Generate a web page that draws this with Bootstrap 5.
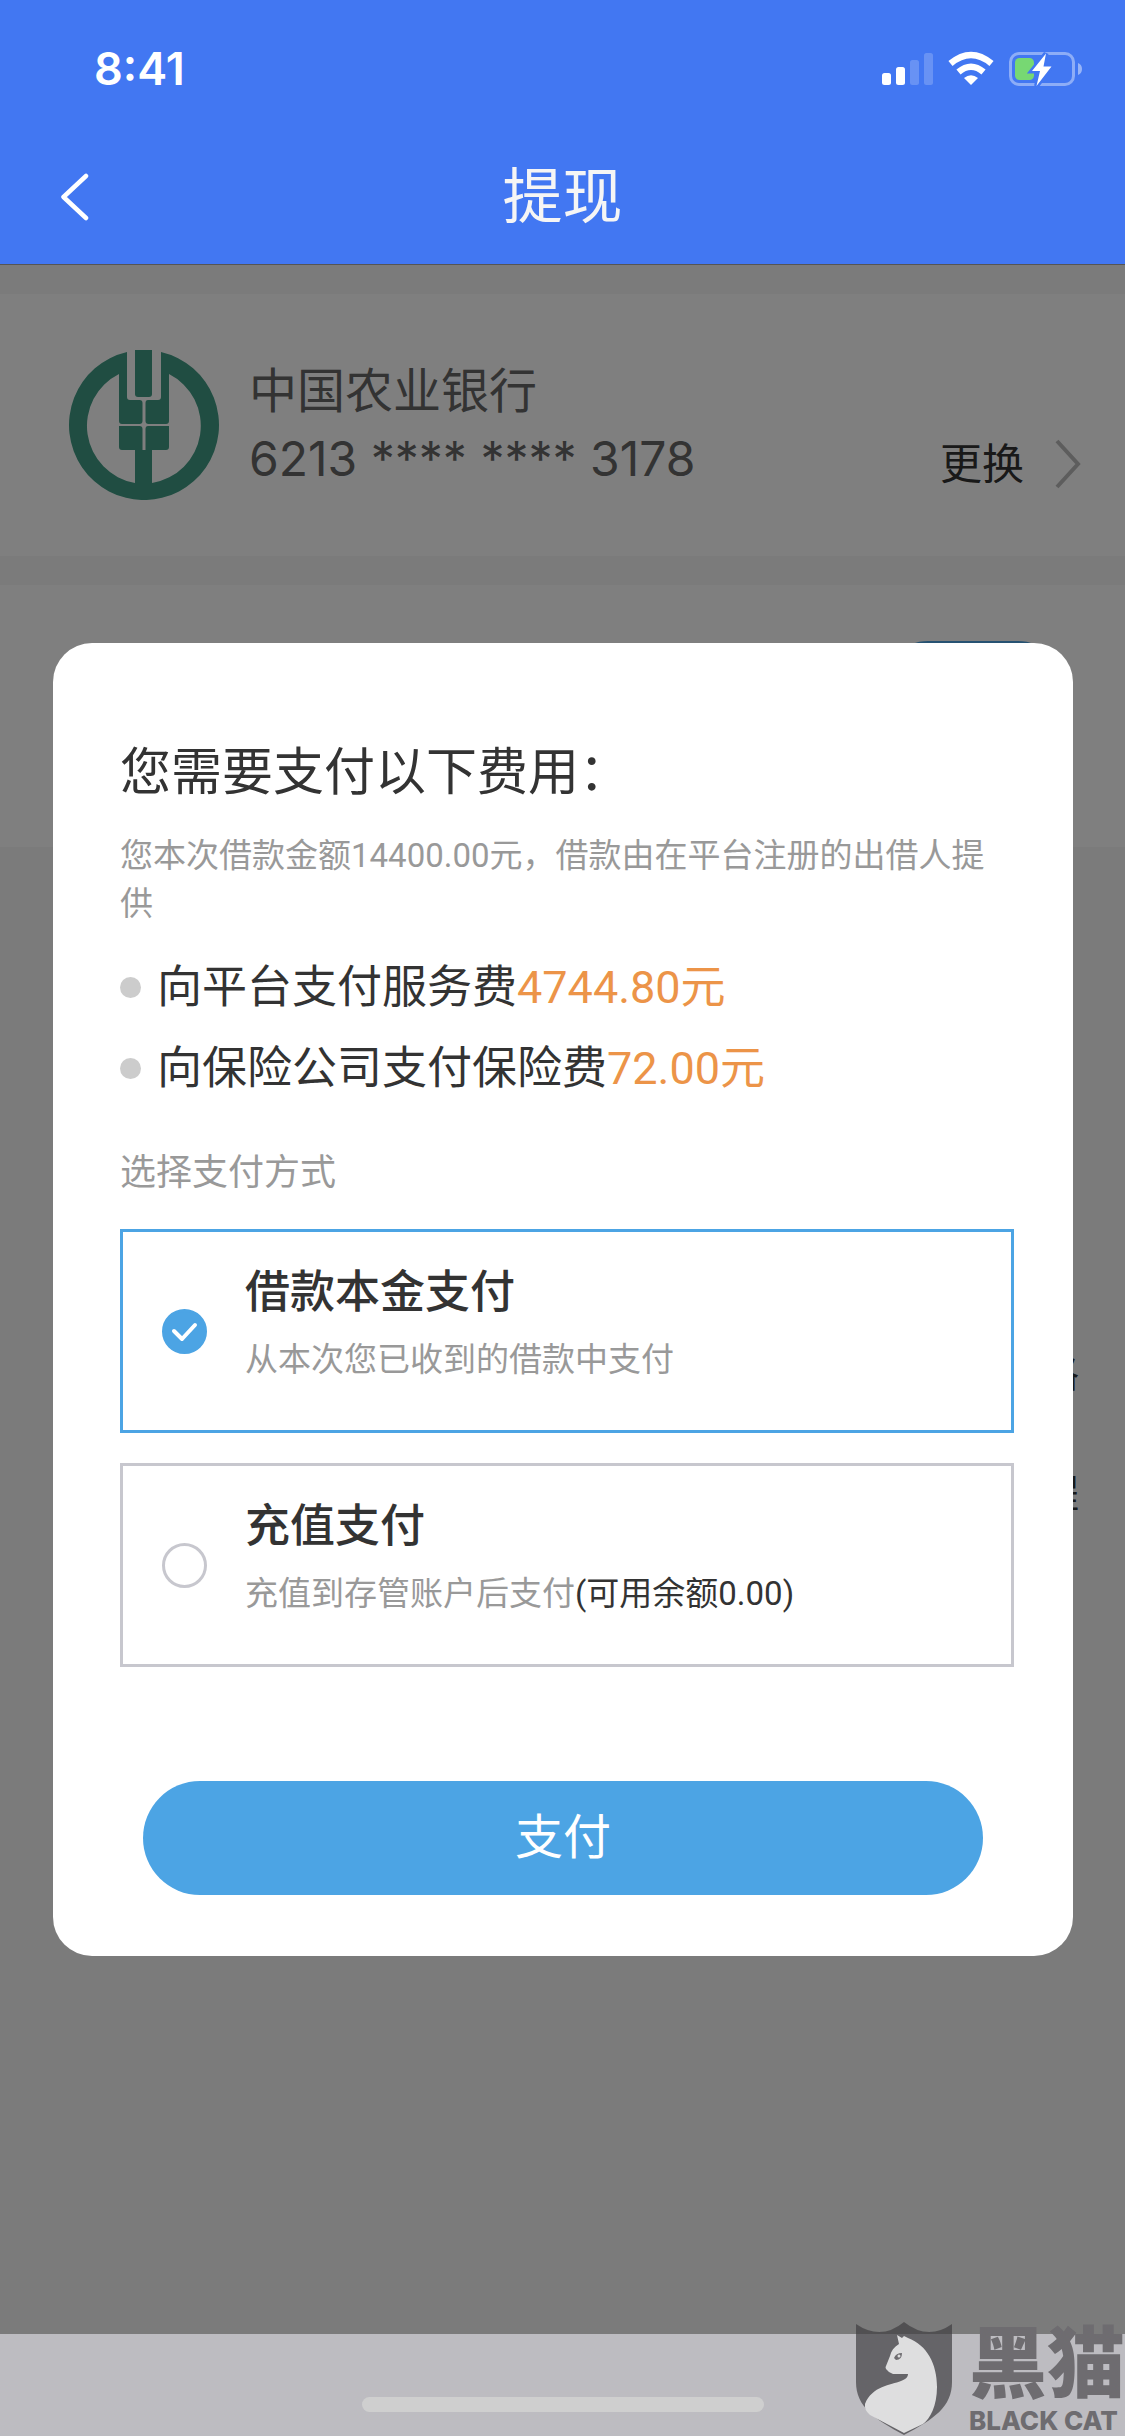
<!DOCTYPE html>
<html lang="zh-CN">
<head>
<meta charset="utf-8">
<meta name="viewport" content="width=device-width, initial-scale=1">
<title>提现</title>
<link href="https://cdn.jsdelivr.net/npm/bootstrap@5.3.0/dist/css/bootstrap.min.css" rel="stylesheet">
<style>
  body { font-family: Inter, "Noto Sans CJK SC", sans-serif; color: #333; background: #f7f7f7; }
  .app { min-height: 100vh; }
  .topbar { background: #4277f2; color: #f5f5f5; border-bottom: 1px solid #555; }
  .status { height: 138px; padding: 0 41px 0 94px; }
  .clock { font-size: 45px; line-height: 54px; font-weight: 600; color: #fff; }
  .titlebar { height: 126px; padding: 0 56px 10px; }
  .titlebar h1 { font-size: 60px; line-height: 72px; font-weight: 400; }
  .side { width: 40px; }
  .panel { background: #fff; margin-top: 29px; height: 262px; }
  .bank { padding: 0 44px 0 69px; }
  .bank-text { font-size: 48px; line-height: 68px; margin-left: 30px; color: #666; }
  .swap { font-size: 42px; line-height: 48px; color: #333; gap: 30px; padding-top: 78px; }
  .peek { background: #4ca4e4; border: 0; width: 180px; height: 90px; margin: 56px 62px 0 0; }
  .tips { font-size: 39px; line-height: 56px; padding: 498px 46px 0 0; }
  .scrim { background: rgba(0, 0, 0, .5); padding: 0 52px 0 53px; }
  .sheet { background: #fff; border-radius: 39px; padding: 96px 59px 61px 67px; font-family: Roboto, "Noto Sans CJK SC", sans-serif; }
  .sheet h2 { font-size: 51px; line-height: 68px; font-weight: 400; margin: 0 0 25px; }
  .note { font-size: 33px; line-height: 48px; color: #999; margin: 0 0 19px; }
  .fees { font-size: 45px; line-height: 81px; }
  .fees li { gap: 16px; }
  .dot { width: 21px; height: 21px; background: #ccc; }
  .amount { color: #ec9448; }
  .pick { font-size: 36px; line-height: 54px; color: #999; margin: 37px 0 29px; }
  .option { border: 3px solid #c7c7ce; height: 204px; padding: 0 39px; gap: 38px; }
  .option.chosen { border-color: #4ca4e4; }
  .option + .option { margin-top: 30px; }
  .option .form-check-input { width: 45px; height: 45px; margin: 0; border: 3px solid #c7c7ce; }
  .option .form-check-input:checked { background-color: #4ca4e4; border-color: #4ca4e4; background-size: 39px;
    background-image: url("data:image/svg+xml,%3Csvg xmlns='http://www.w3.org/2000/svg' viewBox='0 0 39 39'%3E%3Cpath d='M9 19l8 8 13-14' fill='none' stroke='%23fff' stroke-width='4' stroke-linecap='round' stroke-linejoin='round'/%3E%3C/svg%3E"); }
  .option strong { font-size: 45px; line-height: 66px; font-weight: 500; }
  .option small { font-size: 33px; line-height: 68px; color: #999; }
  .option small span { color: #333; }
  .pay { background: #4ca4e4; color: #fff; height: 114px; font-size: 48px; line-height: 72px; margin: 114px 31px 0 23px; }
  .bottom { background: #bdbcc1; height: 102px; padding-bottom: 24px; }
  .handle { width: 402px; height: 15px; background: #cfcfcf; }
  .stamp { color: #6e6c70; gap: 16px; bottom: 0; right: 0; }
  .stamp-cn { font-size: 78px; line-height: 84px; font-weight: 900; }
  .stamp-en { font-size: 26px; line-height: 30px; font-weight: 800; white-space: nowrap; }
</style>
</head>
<body>
<div class="app d-flex flex-column position-relative">
  <header class="topbar">
    <div class="status d-flex align-items-center justify-content-between">
      <span class="clock">8:41</span>
      <svg width="202" height="36" viewBox="0 0 202 36" aria-hidden="true">
        <g fill="#fff">
          <rect x="0" y="22" width="9" height="12" rx="2.500"/>
          <rect x="14" y="16" width="9" height="18" rx="2.500"/>
          <g opacity=".2"><rect x="28" y="9" width="9" height="25" rx="2.500"/><rect x="42" y="2" width="9" height="32" rx="2.500"/></g>
          <path d="M89 34l-7-7q7-5.500 14 0z"/>
        </g>
        <g fill="none" stroke="#fff" stroke-width="6.500"><path d="M68.500 12.500q20.500-17 41 0"/><path d="M76.500 21q12.500-10.500 25 0"/></g>
        <rect x="128.500" y="2.500" width="63" height="31" rx="8.500" fill="none" stroke="#fff" stroke-opacity=".4" stroke-width="3"/>
        <path d="M196 12q4 1.500 4 6t-4 6z" fill="#fff" fill-opacity=".45"/>
        <rect x="133" y="7" width="19" height="22" rx="4.500" fill="#77d873"/>
        <path d="M164 2.500L150 20h8l-3.500 15L169.500 15.500h-8z" fill="#fff" stroke="#4277f2" stroke-width="5" paint-order="stroke"/>
      </svg>
    </div>
    <div class="titlebar d-flex align-items-center justify-content-between">
      <a href="#" class="side d-flex" aria-label="返回"><svg width="36" height="50" viewBox="0 0 36 50"><path d="M30 5L7.500 26 30 47" fill="none" stroke="#fff" stroke-width="4.500" stroke-linecap="round" stroke-linejoin="round"/></svg></a>
      <h1 class="m-0">提现</h1>
      <span class="side"></span>
    </div>
  </header>

  <main class="flex-grow-1 position-relative">
    <section class="panel bank d-flex align-items-center">
      <svg width="150" height="150" viewBox="0 0 150 150" role="img" aria-label="中国农业银行">
        <g fill="#409b84">
          <path d="M58 2A75 75 0 1 0 92 2V47q0 3-3 3H79q-2.500 0-2.500 3V71q0 3 3 3H97q3 0 3-3V24A58 58 0 0 1 83 133V100H97q3 0 3-3V76H79q-2.500 0-2.500 3V100H73.500V79q0-3-3-3H50V97q0 3 3 3H66V133A58 58 0 0 1 50 24V71q0 3 3 3H70.500q3 0 3-3V53q0-3-3-3H61q-3 0-3-3z"/>
          <path d="M66 0H83V44q0 3-3 3H69q-3 0-3-3z"/>
        </g>
      </svg>
      <div class="bank-text flex-grow-1"><div>中国农业银行</div><div>6213 **** **** 3178</div></div>
      <a href="#" class="swap d-flex align-items-center text-decoration-none">更换
        <svg width="27" height="52" viewBox="0 0 27 52"><path d="M3 3L24 26 3 49" fill="none" stroke="#bbb" stroke-width="4"/></svg></a>
    </section>
    <section class="panel d-flex justify-content-end"><button type="button" class="peek rounded-pill" aria-label="全部"></button></section>
    <div class="tips text-end"><p class="m-0 pb-5">格</p><p class="m-0 pt-3">程</p></div>

    <div class="scrim position-absolute top-0 start-0 w-100 h-100 d-flex align-items-center">
      <form class="sheet w-100" role="dialog" aria-labelledby="fee-title">
        <h2 id="fee-title">您需要支付以下费用：</h2>
        <p class="note">您本次借款金额14400.00元，借款由在平台注册的出借人提供</p>
        <ul class="fees list-unstyled m-0">
          <li class="d-flex align-items-center"><i class="dot rounded-circle"></i><span>向平台支付服务费<span class="amount">4744.80元</span></span></li>
          <li class="d-flex align-items-center"><i class="dot rounded-circle"></i><span>向保险公司支付保险费<span class="amount">72.00元</span></span></li>
        </ul>
        <p class="pick">选择支付方式</p>
        <label class="option chosen d-flex align-items-center" for="pay-loan">
          <input class="form-check-input flex-shrink-0" type="radio" name="pay" id="pay-loan" checked>
          <span class="d-flex flex-column pb-2"><strong>借款本金支付</strong><small>从本次您已收到的借款中支付</small></span>
        </label>
        <label class="option d-flex align-items-center" for="pay-topup">
          <input class="form-check-input flex-shrink-0" type="radio" name="pay" id="pay-topup">
          <span class="d-flex flex-column pb-2"><strong>充值支付</strong><small>充值到存管账户后支付<span>(可用余额0.00)</span></small></span>
        </label>
        <div class="d-flex"><button type="button" class="pay btn rounded-pill flex-grow-1">支付</button></div>
      </form>
    </div>
  </main>

  <footer class="bottom d-flex align-items-end justify-content-center"><div class="handle rounded-pill"></div></footer>

  <div class="stamp position-absolute d-flex align-items-end">
    <svg width="98" height="116" viewBox="0 0 98 116" aria-hidden="true">
      <path d="M1 4Q26 21 49 2 73 21 97 4V62C97 87 79 99 49 115 20 99 1 87 1 62z" fill="#403e42" fill-opacity=".7"/>
      <path d="M42 15l5 3 2-2 4 2C72 25 82 44 82 67 82 86 75 99 68 104L49 113 15 95Q9 90 10 84C17 66 36 65 46 61 51 59 53 57 53 54H38Q34 53 31 49 30 47 31 46L35 36C36 31 39 27 44 24z" fill="#dededf"/>
      <path d="M39 38q2-5 8-5 0 7-6 7zM43 34l1 5" fill="#6e6c70"/>
      <circle cx="44" cy="36" r="1.500" fill="#dededf"/>
    </svg>
    <div class="d-flex flex-column"><span class="stamp-cn">黑猫</span><span class="stamp-en">BLACK CAT</span></div>
  </div>
</div>
<script src="https://cdn.jsdelivr.net/npm/bootstrap@5.3.0/dist/js/bootstrap.bundle.min.js"></script>
</body>
</html>
